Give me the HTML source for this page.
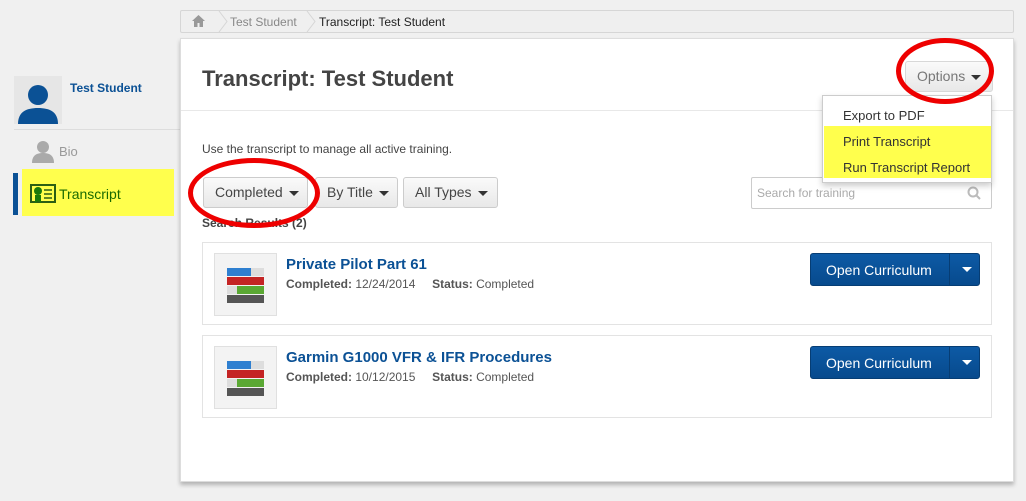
<!DOCTYPE html>
<html><head><style>
*{box-sizing:border-box;margin:0;padding:0}
body{width:1026px;height:501px;background:#f0f0f0;font-family:"Liberation Sans",sans-serif;position:relative;overflow:hidden;color:#333}
.abs{position:absolute}
.bc{left:180px;top:10px;width:834px;height:23px;background:#efefef;border:1px solid #d6d6d6;border-radius:2px;font-size:12px;color:#888}
.panel{left:180px;top:38px;width:834px;height:444px;background:#fff;border:1px solid #ddd;box-shadow:0 3px 4px rgba(0,0,0,.25)}
.btn{position:absolute;height:31px;border:1px solid #ccc;border-radius:3px;background:linear-gradient(#fafafa,#e8e8e8);font-size:14px;color:#444;line-height:29px;padding-left:11px}
.caret{display:inline-block;width:0;height:0;border-left:5px solid transparent;border-right:5px solid transparent;border-top:5px solid #333;vertical-align:middle;margin-left:6px}
.card{position:absolute;left:202px;width:790px;height:83px;border:1px solid #e3e3e3}
.thumb{position:absolute;left:11px;top:10px;width:63px;height:63px;background:#f3f3f3;border:1px solid #e0e0e0}
.ttl{position:absolute;left:83px;top:13px;font-size:15px;font-weight:bold;color:#0b5195}
.meta{position:absolute;left:83px;top:34px;font-size:12px;color:#555}
.ob{position:absolute;left:607px;top:10px;width:170px;height:33px;background:linear-gradient(#0d5aa5,#074a8d);border:1px solid #063d74;border-radius:3px;color:#fff;font-size:14px}
.ring{position:absolute;border:5px solid #e00;border-radius:50%}
.chev{position:absolute;top:0;width:12px;height:21px}
</style></head><body>
<div class="abs bc">
<svg class="abs" style="left:11px;top:4px" width="13" height="12" viewBox="0 0 13 12"><path d="M6.5 0L0 6h2v6h3.5V8h2v4H11V6h2z" fill="#999"/></svg>
<svg class="chev" style="left:36px" viewBox="0 0 12 21"><path d="M2 0L10 10.5L2 21" fill="none" stroke="#d6d6d6"/></svg>
<span class="abs" style="left:49px;top:4px">Test Student</span>
<svg class="chev" style="left:124px" viewBox="0 0 12 21"><path d="M2 0L10 10.5L2 21" fill="none" stroke="#d6d6d6"/></svg>
<span class="abs" style="left:138px;top:4px;color:#222">Transcript: Test Student</span>
</div>
<div class="abs" style="left:14px;top:76px;width:48px;height:48px;background:#e6e6e6"></div>
<svg class="abs" style="left:16px;top:82px" width="44" height="42" viewBox="0 0 44 42"><circle cx="22" cy="13" r="10" fill="#0b5195"/><path d="M2 42C2 30 10 26 22 26S42 30 42 42Z" fill="#0b5195"/></svg>
<div class="abs" style="left:70px;top:81px;font-size:12px;font-weight:bold;color:#0b5195">Test Student</div>
<div class="abs" style="left:14px;top:129px;width:166px;height:1px;background:#ddd"></div>
<svg class="abs" style="left:31px;top:140px" width="24" height="23" viewBox="0 0 24 23"><circle cx="12" cy="7" r="6" fill="#aaa"/><path d="M1 23C1 15 6 13 12 13S23 15 23 23Z" fill="#aaa"/></svg>
<div class="abs" style="left:59px;top:144px;font-size:13px;color:#999">Bio</div>
<div class="abs" style="left:13px;top:173px;width:5px;height:42px;background:#0b5195"></div>
<div class="abs" style="left:22px;top:169px;width:152px;height:47px;background:#ffff4d"></div>
<svg class="abs" style="left:30px;top:184px" width="26" height="20" viewBox="0 0 26 20"><rect x="1" y="1" width="24" height="17" fill="none" stroke="#2c5f14" stroke-width="2"/><circle cx="8" cy="7" r="4" fill="#1a7a0a"/><path d="M5 11h6v8l-3-2-3 2z" fill="#1a7a0a"/><path d="M14 6h8M14 10h8M14 14h8" stroke="#2c5f14" stroke-width="1.5"/></svg>
<div class="abs" style="left:59px;top:186px;font-size:14px;color:#1a6b00">Transcript</div>
<div class="abs panel">
<div class="abs" style="left:21px;top:27px;font-size:22px;font-weight:bold;color:#444">Transcript: Test Student</div>
<div class="abs" style="left:0;top:71px;width:832px;height:1px;background:#e8e8e8"></div>
<div class="btn" style="left:724px;top:22px;width:88px;color:#777;border-color:#d8d8d8">Options<span class="caret"></span></div>
<div class="abs" style="left:21px;top:103px;font-size:12px;color:#444">Use the transcript to manage all active training.</div>
<div class="btn" style="left:22px;top:138px;width:105px">Completed<span class="caret"></span></div>
<div class="btn" style="left:134px;top:138px;width:83px">By Title<span class="caret"></span></div>
<div class="btn" style="left:222px;top:138px;width:95px">All Types<span class="caret"></span></div>
<div class="abs" style="left:570px;top:138px;width:241px;height:32px;border:1px solid #ccc;border-radius:2px;font-size:12px;color:#aaa;padding:8px 0 0 5px">Search for training
<svg class="abs" style="right:10px;top:8px" width="14" height="14" viewBox="0 0 14 14"><circle cx="6" cy="6" r="4.5" fill="none" stroke="#bbb" stroke-width="2"/><path d="M9 9l4 4" stroke="#bbb" stroke-width="2"/></svg></div>
<div class="abs" style="left:21px;top:177px;font-size:12px;font-weight:bold;color:#444">Search Results (2)</div>
</div>
<div class="card" style="top:242px"><div class="thumb"><svg width="61" height="61" viewBox="0 0 61 61"><rect x="12" y="14" width="37" height="8" fill="#2e7fd0"/><rect x="12" y="23" width="37" height="8" fill="#c42424"/><rect x="12" y="32" width="37" height="8" fill="#5aa833"/><rect x="12" y="41" width="37" height="8" fill="#555"/><rect x="12" y="32" width="10" height="8" fill="#ddd"/><rect x="36" y="14" width="13" height="8" fill="#ddd"/></svg></div>
<div class="ttl">Private Pilot Part 61</div><div class="meta"><b>Completed:</b> 12/24/2014 &nbsp;&nbsp;&nbsp; <b>Status:</b> Completed</div>
<div class="ob"><span class="abs" style="left:15px;top:8px">Open Curriculum</span><div class="abs" style="left:138px;top:0;width:1px;height:31px;background:#063d74"></div><span class="caret abs" style="left:145px;top:13px;border-top-color:#fff"></span></div></div>
<div class="card" style="top:335px"><div class="thumb"><svg width="61" height="61" viewBox="0 0 61 61"><rect x="12" y="14" width="37" height="8" fill="#2e7fd0"/><rect x="12" y="23" width="37" height="8" fill="#c42424"/><rect x="12" y="32" width="37" height="8" fill="#5aa833"/><rect x="12" y="41" width="37" height="8" fill="#555"/><rect x="12" y="32" width="10" height="8" fill="#ddd"/><rect x="36" y="14" width="13" height="8" fill="#ddd"/></svg></div>
<div class="ttl">Garmin G1000 VFR &amp; IFR Procedures</div><div class="meta"><b>Completed:</b> 10/12/2015 &nbsp;&nbsp;&nbsp; <b>Status:</b> Completed</div>
<div class="ob"><span class="abs" style="left:15px;top:8px">Open Curriculum</span><div class="abs" style="left:138px;top:0;width:1px;height:31px;background:#063d74"></div><span class="caret abs" style="left:145px;top:13px;border-top-color:#fff"></span></div></div>
<div class="abs" style="left:822px;top:95px;width:170px;height:88px;background:#fff;border:1px solid #ccc;box-shadow:0 3px 6px rgba(0,0,0,.2);font-size:13px;color:#333">
<div class="abs" style="left:20px;top:12px">Export to PDF</div>
<div class="abs" style="left:1px;top:30px;width:167px;height:52px;background:#ffff4d"></div>
<div class="abs" style="left:20px;top:38px">Print Transcript</div>
<div class="abs" style="left:20px;top:64px">Run Transcript Report</div>
</div>
<div class="ring" style="left:896px;top:38px;width:98px;height:66px"></div>
<div class="ring" style="left:188px;top:158px;width:132px;height:70px"></div>
</body></html>
